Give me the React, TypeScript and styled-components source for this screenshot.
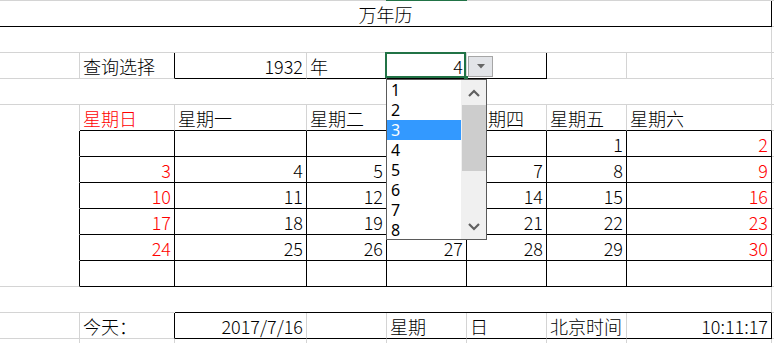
import React from 'react';
import styled, { createGlobalStyle, css } from 'styled-components';

const GRID = '#d4d4d4';
const INK = '#000000';
const NONE = 'transparent';
const GREEN = '#217346';

const Global = createGlobalStyle`
  html, body { margin: 0; padding: 0; background: #fff; }
  body { font-family: "Noto Sans CJK SC", "Noto Sans", sans-serif; }
`;

const Page = styled.div`
  position: relative;
  width: 774px;
  height: 343px;
  overflow: hidden;
  background: #fff;
`;

const HeaderEdge = styled.div`
  display: flex;
  height: 1px;
`;

const EdgeSeg = styled.div<{ $w?: number; $active?: boolean }>`
  height: 1px;
  background: ${(p) => (p.$active ? GREEN : GRID)};
  ${(p) => (p.$w ? `width: ${p.$w}px; flex: none;` : 'flex: 1;')}
`;

const Sheet = styled.div`
  display: grid;
  grid-template-columns: 80px 95px 132px 80px 80px 80px 80px 145px 1fr;
  grid-auto-rows: 26px;
`;

type Align = 'left' | 'right' | 'center';

const Cell = styled.div<{
  $r?: string;
  $b?: string;
  $align?: Align;
  $red?: boolean;
  $span?: number;
  $selected?: boolean;
}>`
  box-sizing: border-box;
  position: relative;
  grid-column: span ${(p) => p.$span ?? 1};
  border-right: 1px solid ${(p) => p.$r ?? GRID};
  border-bottom: 1px solid ${(p) => p.$b ?? GRID};
  display: flex;
  align-items: center;
  justify-content: ${(p) =>
    p.$align === 'right' ? 'flex-end' : p.$align === 'center' ? 'center' : 'flex-start'};
  padding: 1px 3px 0 3px;
  font-size: 18px;
  font-weight: 300;
  line-height: 1;
  color: ${(p) => (p.$red ? '#ff0000' : '#000')};
  white-space: nowrap;
  ${(p) =>
    p.$selected &&
    css`
      &::after {
        content: '';
        position: absolute;
        left: -2px;
        top: -1px;
        right: 0;
        bottom: 0;
        border: 2px solid ${GREEN};
        z-index: 2;
        pointer-events: none;
      }
      &::before {
        content: '';
        position: absolute;
        right: -2px;
        bottom: -2px;
        width: 4px;
        height: 4px;
        background: ${GREEN};
        z-index: 3;
      }
    `}
`;

const DropButton = styled.div`
  position: absolute;
  left: 468px;
  top: 56px;
  width: 25px;
  height: 21px;
  box-sizing: border-box;
  border: 1px solid #a6a6a6;
  background: #e2e4e8;
  display: flex;
  align-items: center;
  justify-content: center;
  z-index: 4;
`;

const ListBox = styled.div`
  position: absolute;
  left: 386px;
  top: 79px;
  width: 101px;
  height: 161px;
  box-sizing: border-box;
  border: 1px solid #5a5a5a;
  background: #fff;
  display: flex;
  z-index: 5;
  overflow: hidden;
`;

const Items = styled.div`
  flex: 1;
  display: flex;
  flex-direction: column;
`;

const Item = styled.div<{ $active?: boolean }>`
  flex: none;
  height: 20px;
  display: flex;
  align-items: center;
  padding-left: 4px;
  font-family: "Noto Sans", "Open Sans", sans-serif;
  font-size: 16px;
  color: ${(p) => (p.$active ? '#fff' : '#000')};
  background: ${(p) => (p.$active ? '#3399ff' : 'transparent')};
`;

const ScrollBar = styled.div`
  flex: none;
  width: 25px;
  background: #f0f0f0;
  display: flex;
  flex-direction: column;
`;

const ScrollArrow = styled.div`
  flex: none;
  height: 25px;
  display: flex;
  align-items: center;
  justify-content: center;
`;

const Thumb = styled.div`
  flex: none;
  height: 66px;
  margin-left: 1px;
  background: #cdcdcd;
`;

const Track = styled.div`
  flex: 1;
`;

type Spec = {
  t?: string;
  r?: string;
  b?: string;
  a?: Align;
  red?: boolean;
  span?: number;
  sel?: boolean;
};

const COL_I: Spec = { r: NONE, b: GRID };

function buildCalendar(year: number, month: number): (number | null)[][] {
  const first = new Date(year, month - 1, 1).getDay();
  const days = new Date(year, month, 0).getDate();
  const weeks: (number | null)[][] = [];
  let day = 1 - first;
  for (let w = 0; w < 6; w++) {
    const row: (number | null)[] = [];
    for (let d = 0; d < 7; d++) {
      row.push(day >= 1 && day <= days ? day : null);
      day++;
    }
    weeks.push(row);
  }
  return weeks;
}

const WEEK = ['星期日', '星期一', '星期二', '星期三', '星期四', '星期五', '星期六'];

function buildRows(): Spec[][] {
  const rows: Spec[][] = [];
  rows.push([{ t: '万年历', a: 'center', span: 8, r: INK, b: INK }, COL_I]);
  rows.push([{ span: 8 }, COL_I]);
  rows.push([
    {},
    { t: '查询选择', r: INK },
    { t: '1932', a: 'right', b: INK },
    { t: '年', b: INK },
    { t: '4', a: 'right', b: INK, sel: true },
    { r: INK, b: INK },
    {},
    {},
    COL_I,
  ]);
  rows.push([{ span: 8 }, COL_I]);
  rows.push([
    { b: NONE },
    ...WEEK.map((w, i) => ({ t: w, b: INK, red: i === 0 })),
    COL_I,
  ]);
  const cal = buildCalendar(1932, 4);
  cal.forEach((week, wi) => {
    rows.push([
      { r: INK, b: wi === cal.length - 1 ? GRID : NONE },
      ...week.map((d, i) => ({
        t: d === null ? undefined : String(d),
        a: 'right' as Align,
        r: INK,
        b: INK,
        red: i === 0 || i === 6,
      })),
      COL_I,
    ]);
  });
  rows.push([{ span: 2, r: NONE }, { span: 6, b: INK }, COL_I]);
  rows.push([
    {},
    { t: '今天：', r: INK },
    { t: '2017/7/16', a: 'right', b: INK },
    { b: INK },
    { t: '星期', b: INK },
    { t: '日', b: INK },
    { t: '北京时间', b: INK },
    { t: '10:11:17', a: 'right', r: INK, b: INK },
    COL_I,
  ]);
  rows.push([{}, {}, {}, {}, {}, {}, {}, {}, COL_I]);
  return rows;
}

const Chevron = ({ up }: { up?: boolean }) => (
  <svg width="12" height="8" viewBox="0 0 12 8">
    <polyline
      points={up ? '1,7 6,2 11,7' : '1,1 6,6 11,1'}
      fill="none"
      stroke="#606060"
      strokeWidth="2.2"
    />
  </svg>
);

const TriangleDown = () => (
  <svg width="8" height="5" viewBox="0 0 8 5">
    <polygon points="0,0 8,0 4,4.5" fill="#666" />
  </svg>
);

export default function App() {
  const rows = buildRows();
  const months = [1, 2, 3, 4, 5, 6, 7, 8];
  return (
    <>
      <Global />
      <Page>
        <HeaderEdge>
          <EdgeSeg $w={386} />
          <EdgeSeg $w={81} $active />
          <EdgeSeg />
        </HeaderEdge>
        <Sheet>
          {rows.map((row, ri) =>
            row.map((c, ci) => (
              <Cell
                key={`${ri}-${ci}`}
                $r={c.r}
                $b={c.b}
                $align={c.a}
                $red={c.red}
                $span={c.span}
                $selected={c.sel}
              >
                {c.t}
              </Cell>
            ))
          )}
        </Sheet>
        <DropButton>
          <TriangleDown />
        </DropButton>
        <ListBox>
          <Items>
            {months.map((m) => (
              <Item key={m} $active={m === 3}>
                {m}
              </Item>
            ))}
          </Items>
          <ScrollBar>
            <ScrollArrow>
              <Chevron up />
            </ScrollArrow>
            <Thumb />
            <Track />
            <ScrollArrow>
              <Chevron />
            </ScrollArrow>
          </ScrollBar>
        </ListBox>
      </Page>
    </>
  );
}
